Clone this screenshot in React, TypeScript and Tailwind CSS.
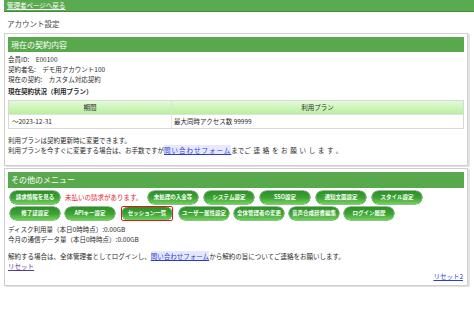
import React from "react";

const btn =
  "flex items-center justify-center w-[50px] h-[13px] rounded-full text-white font-bold text-[5.5px] leading-none whitespace-nowrap bg-gradient-to-b from-[#2f8f2a] via-[#3aa232] to-[#6fd15a] shadow-[0_0_0_0.5px_#2a7a25]";

function Btn({ label }: { label: string }) {
  return <div className={btn}>{label}</div>;
}

export default function App() {
  return (
    <div
      className="w-[474px] h-[319px] bg-white text-[#2a2a2a] overflow-hidden"
      style={{ fontFamily: '"Noto Sans CJK JP", "Noto Sans", sans-serif' }}
    >
      <div className="ml-[4px] h-[12px] bg-[#5aaa4f] border-b border-[#3f8f3a] flex items-center pl-[3px]">
        <span className="text-white underline text-[6.5px] leading-none">管理者ページへ戻る</span>
      </div>
      <div className="pl-[7px] h-[21px] flex items-center pt-[2px] text-[7.5px] text-[#444]">アカウント設定</div>

      {/* Panel 1 */}
      <div className="ml-[4px] w-[464px] border border-[#cfcfcf] shadow-[2px_1px_0_#e2e2e2] p-[3px] pb-[10px]">
        <div className="h-[15px] bg-[#58a94c] flex items-center pl-[3px] text-white text-[8px]">現在の契約内容</div>
        <div className="text-[6.5px] leading-[10px] mt-[2px]">
          <div>会員ID:　E00100</div>
          <div>契約者名:　デモ用アカウント100</div>
          <div>現在の契約:　カスタム対応契約</div>
          <div className="font-bold mt-[2px]">現在契約状況（利用プラン）</div>
        </div>
        <div className="mt-[4px] border border-[#d8d8d8] text-[6.5px]">
          <div className="flex h-[13px] bg-gradient-to-b from-[#e4fad8] to-[#b9ef9f]">
            <div className="w-[163px] flex items-center justify-center border-r border-[#d0e8c8]">期間</div>
            <div className="flex-1 flex items-center justify-center">利用プラン</div>
          </div>
          <div className="flex h-[14px] border-t border-[#e0e0e0]">
            <div className="w-[163px] flex items-center pl-[3px] border-r border-[#e6e6e6]">～2023-12-31</div>
            <div className="flex-1 flex items-center pl-[2px]">最大同時アクセス数 99999</div>
          </div>
        </div>
        <div className="text-[6.5px] leading-[10px] mt-[6px]">
          <div>利用プランは契約更新時に変更できます。</div>
          <div className="whitespace-nowrap">
            利用プランを今すぐに変更する場合は、お手数ですが
            <span className="text-[#2a3fd0] underline bg-[#e6e8ff] tracking-[1px]">問い合わせフォーム</span>
            まで<span className="tracking-[2.7px]">ご連絡をお願いします。</span>
          </div>
        </div>
      </div>

      {/* Panel 2 */}
      <div className="ml-[4px] mt-[2px] w-[464px] border border-[#cfcfcf] shadow-[2px_1px_0_#e2e2e2] p-[3px] pb-[4px]">
        <div className="h-[16px] bg-[#58a94c] flex items-center pl-[3px] text-white text-[8px]">その他のメニュー</div>
        <div className="mt-[3px] flex items-center gap-[5px] pl-[2px]">
          <Btn label="請求情報を見る" />
          <span className="text-[#e3202a] text-[6.5px] leading-none w-[78px] whitespace-nowrap">未払いの請求があります。</span>
          <div className="flex gap-[6px]">
            <Btn label="未処理の入金等" />
            <Btn label="システム設定" />
            <Btn label="SSO設定" />
            <Btn label="通知文面設定" />
            <Btn label="スタイル設定" />
          </div>
        </div>
        <div className="mt-[3px] flex items-center gap-[5px] pl-[2px]">
          <Btn label="修了証設定" />
          <Btn label="APIキー設定" />
          <div className="outline outline-[1.5px] outline-[#e01818] rounded-[1px] ml-[2px] mr-[2px]">
            <Btn label="セッション一覧" />
          </div>
          <Btn label="ユーザー属性設定" />
          <Btn label="全体管理者の変更" />
          <Btn label="音声合成辞書編集" />
          <Btn label="ログイン履歴" />
        </div>
        <div className="text-[6.5px] leading-[10px] mt-[4px]">
          <div>ディスク利用量（本日0時時点）:0.00GB</div>
          <div>今月の通信データ量（本日0時時点）:0.00GB</div>
          <div className="h-[7px]"></div>
          <div>
            解約する場合は、全体管理者としてログインし、
            <span className="text-[#2a3fd0] underline bg-[#e6e8ff]">問い合わせフォーム</span>
            から解約の旨についてご連絡をお願いします。
          </div>
          <div>
            <span className="text-[#5a3a8a] underline">リセット</span>
          </div>
          <div className="text-right pr-[1px]">
            <span className="text-[#2a3fd0] underline">リセット2</span>
          </div>
        </div>
      </div>
    </div>
  );
}
